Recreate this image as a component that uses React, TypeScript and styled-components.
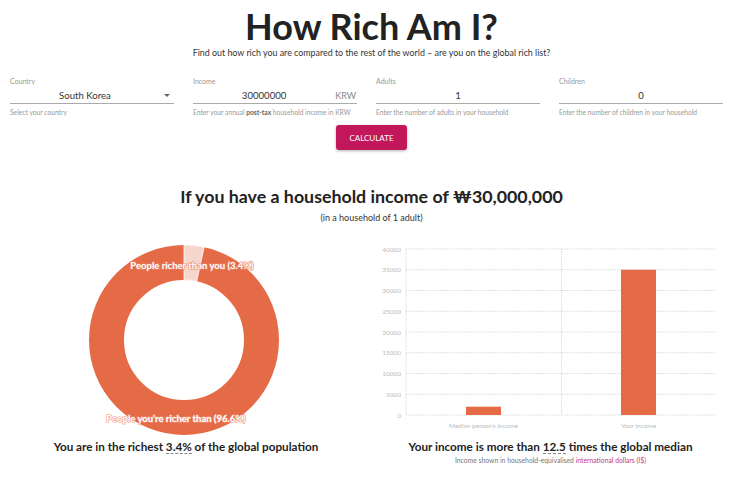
import React from "react";
import styled, { createGlobalStyle } from "styled-components";

const ORANGE = "#e56b47";
const LIGHT = "#f6d6cd";
const PINK = "#c2185b";

const GlobalStyle = createGlobalStyle`
  body {
    margin: 0;
    font-family: "Lato", "Open Sans", sans-serif;
    color: #222;
    background: #fff;
  }
`;

const fields = [
  { label: "Country", value: "South Korea", help: <>Select your country</>, select: true },
  {
    label: "Income",
    value: "30000000",
    suffix: "KRW",
    help: (
      <>
        Enter your annual <b>post-tax</b> household income in KRW
      </>
    ),
  },
  { label: "Adults", value: "1", help: <>Enter the number of adults in your household</> },
  { label: "Children", value: "0", help: <>Enter the number of children in your household</> },
];

const ticks = [0, 5000, 10000, 15000, 20000, 25000, 30000, 35000, 40000];

const App = () => {
  // donut geometry
  const cx = 95;
  const cy = 95;
  const R = 95;
  const r = 60;
  const share = 0.034;
  const a = share * Math.PI * 2;
  const ox = cx + R * Math.sin(a);
  const oy = cy - R * Math.cos(a);
  const ix = cx + r * Math.sin(a);
  const iy = cy - r * Math.cos(a);
  const slice = `M ${cx} ${cy - R} A ${R} ${R} 0 0 1 ${ox} ${oy} L ${ix} ${iy} A ${r} ${r} 0 0 0 ${cx} ${cy - r} Z`;

  const y0 = 170;
  const scale = 166 / 40000;

  return (
    <>
      <GlobalStyle />
      <Page>
        <Header>
          <Title>How Rich Am I?</Title>
          <Lead>
            Find out how rich you are compared to the rest of the world – are you on the global rich list?
          </Lead>
        </Header>

        <Form>
          {fields.map((f) => (
            <Field key={f.label}>
              <FieldLabel>{f.label}</FieldLabel>
              <InputRow>
                <Value $select={f.select}>{f.value}</Value>
                {f.suffix && <Suffix>{f.suffix}</Suffix>}
                {f.select && <Caret />}
              </InputRow>
              <Help>{f.help}</Help>
            </Field>
          ))}
        </Form>

        <ButtonRow>
          <Button>CALCULATE</Button>
        </ButtonRow>

        <Result>
          <ResultTitle>If you have a household income of ₩30,000,000</ResultTitle>
          <ResultSub>(in a household of 1 adult)</ResultSub>
        </Result>

        <Charts>
          <Column>
            <Donut width="190" height="190" viewBox="0 0 190 190">
              <circle cx={cx} cy={cy} r={(R + r) / 2} fill="none" stroke={ORANGE} strokeWidth={R - r} />
              <path d={slice} fill={LIGHT} stroke="#fff" strokeWidth="0.8" />
              <DonutLabel x="103" y="24" stroke="#e9876c">
                People richer than you (3.4%)
              </DonutLabel>
              <DonutLabel x="87" y="177" stroke="#f19a85">
                People you're richer than (96.6%)
              </DonutLabel>
            </Donut>
            <Caption>
              You are in the richest <Dotted>3.4%</Dotted> of the global population
            </Caption>
          </Column>

          <Column $shift={14}>
            <Bars width="371" height="190" viewBox="0 0 371 190" $shift={14}>
              {ticks.map((t) => {
                const y = y0 - t * scale;
                return (
                  <g key={t}>
                    <line x1="34" x2="344" y1={y} y2={y} stroke="#ccc" strokeWidth="0.8" strokeDasharray="1.2 1.2" />
                    <AxisText x="29" y={y + 2.5} textAnchor="end">
                      {t}
                    </AxisText>
                  </g>
                );
              })}
              <line x1="34" x2="34" y1={y0 - 166} y2={y0} stroke="#ccc" strokeWidth="0.8" strokeDasharray="1.2 1.2" />
              <line x1="189.5" x2="189.5" y1={y0 - 166} y2={y0} stroke="#ccc" strokeWidth="0.8" strokeDasharray="1.2 1.2" />
              <rect x="94" y={y0 - 2000 * scale} width="35" height={2000 * scale} fill={ORANGE} />
              <rect x="249" y={y0 - 35000 * scale} width="35" height={35000 * scale} fill={ORANGE} />
              <AxisText x="111.5" y="183" textAnchor="middle">
                Median person's income
              </AxisText>
              <AxisText x="266.5" y="183" textAnchor="middle">
                Your income
              </AxisText>
            </Bars>
            <Caption>
              Your income is more than <Dotted>12.5</Dotted> times the global median
            </Caption>
            <Note>
              Income shown in household-equivalised <NoteLink>international dollars (I$)</NoteLink>
            </Note>
          </Column>
        </Charts>
      </Page>
    </>
  );
};

export default App;

const Page = styled.div`
  width: 743px;
  height: 477px;
  overflow: hidden;
`;

const Header = styled.header`
  text-align: center;
  padding-top: 6px;
`;

const Title = styled.h1`
  margin: 0;
  font-size: 36px;
  line-height: 40px;
  font-weight: 700;
  color: #222;
`;

const Lead = styled.p`
  margin: 1px 0 0;
  font-size: 8.9px;
  line-height: 12px;
  color: #333;
`;

const Form = styled.div`
  display: grid;
  grid-template-columns: repeat(4, 164px);
  column-gap: 19px;
  padding: 18px 18px 0 10px;
`;

const Field = styled.div`
  display: flex;
  flex-direction: column;
`;

const FieldLabel = styled.label`
  font-size: 7px;
  line-height: 9px;
  color: #999;
`;

const InputRow = styled.div`
  position: relative;
  display: flex;
  align-items: center;
  height: 16px;
  margin-top: 1px;
  border-bottom: 1px solid #aaa;
`;

const Value = styled.span<{ $select?: boolean }>`
  flex: 1;
  text-align: center;
  font-size: 9.6px;
  color: #333;
  padding-right: ${(p) => (p.$select ? 14 : 0)}px;
`;

const Suffix = styled.span`
  font-size: 9px;
  color: #888;
  padding-right: 1px;
`;

const Caret = styled.span`
  position: absolute;
  right: 4px;
  top: 7px;
  width: 0;
  height: 0;
  border-left: 3.5px solid transparent;
  border-right: 3.5px solid transparent;
  border-top: 3.5px solid #666;
`;

const Help = styled.div`
  margin-top: 4px;
  font-size: 6.7px;
  line-height: 9px;
  color: #999;
  white-space: nowrap;
  b {
    color: #666;
  }
`;

const ButtonRow = styled.div`
  display: flex;
  justify-content: center;
  margin-top: 8px;
`;

const Button = styled.button`
  width: 71px;
  height: 25px;
  border: none;
  border-radius: 3px;
  background: ${PINK};
  color: #fff;
  font-family: inherit;
  font-size: 8px;
  box-shadow: 0 1px 3px rgba(0, 0, 0, 0.3);
  cursor: pointer;
`;

const Result = styled.div`
  text-align: center;
  margin-top: 35px;
`;

const ResultTitle = styled.h2`
  margin: 0;
  font-size: 17.8px;
  line-height: 22px;
  font-weight: 700;
  color: #222;
`;

const ResultSub = styled.div`
  margin-top: 5px;
  font-size: 9px;
  line-height: 11px;
  color: #333;
`;

const Charts = styled.div`
  display: grid;
  grid-template-columns: 372px 371px;
  margin-top: 22px;
`;

const Column = styled.div<{ $shift?: number }>`
  display: flex;
  flex-direction: column;
  align-items: center;
  padding-right: ${(p) => p.$shift ?? 0}px;
`;

const Donut = styled.svg`
  display: block;
  margin-left: -4px;
  overflow: visible;
`;

const DonutLabel = styled.text`
  font-family: "Lato", sans-serif;
  font-size: 9.5px;
  font-weight: 700;
  fill: #fff;
  stroke-width: 1.2px;
  paint-order: stroke;
  text-anchor: middle;
`;

const Bars = styled.svg<{ $shift?: number }>`
  display: block;
  flex: none;
  margin-right: -${(p) => p.$shift ?? 0}px;
`;

const AxisText = styled.text`
  font-family: "Lato", sans-serif;
  font-size: 6.5px;
  fill: #bbb;
`;

const Caption = styled.div`
  margin-top: 4px;
  font-size: 11.7px;
  line-height: 15px;
  font-weight: 700;
  color: #222;
`;

const Dotted = styled.span`
  border-bottom: 1px dashed #888;
`;

const Note = styled.div`
  margin-top: 2px;
  font-size: 6.8px;
  color: #777;
`;

const NoteLink = styled.span`
  color: #c2407a;
`;
